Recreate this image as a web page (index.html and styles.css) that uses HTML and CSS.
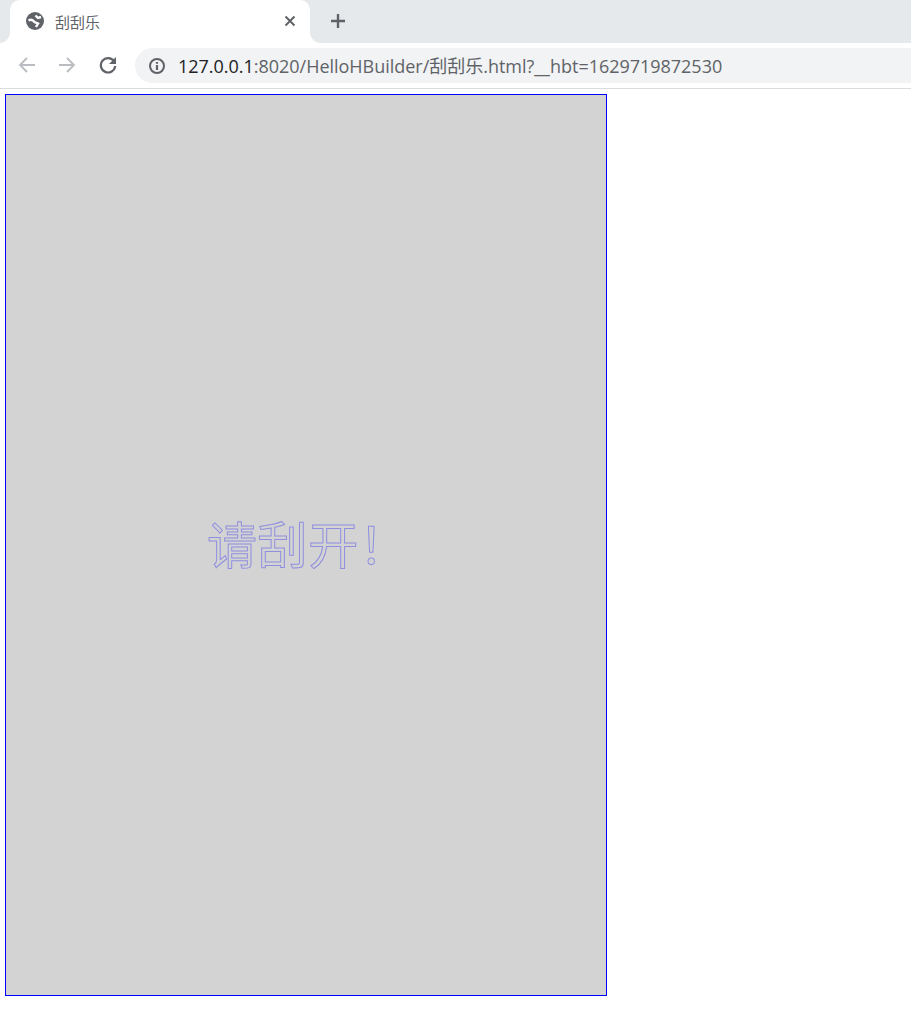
FILE: index.html
```html
<!DOCTYPE html>
<html lang="zh-CN">
<head>
<meta charset="utf-8">
<title>刮刮乐</title>
<link rel="stylesheet" href="styles.css">
</head>
<body>
<header class="chrome">
  <div class="tabstrip">
    <div class="tab">
      <svg class="favicon" viewBox="0 0 18 18" width="18" height="18"><circle cx="9" cy="9" r="9" fill="#5f6368"/><path d="M2.5 8.5C5 7.2 7 8 8.5 10L12 11.5 10 15M9.5 3.5 12 6 15 5" stroke="#fff" stroke-width="2.4" fill="none"/></svg>
      <span class="tab-title">刮刮乐</span>
      <svg class="tab-close" viewBox="0 0 12 12" width="12" height="12"><path d="M1.5 1.5 10.5 10.5M10.5 1.5 1.5 10.5" stroke="#5f6368" stroke-width="2" fill="none"/></svg>
    </div>
    <svg class="new-tab" viewBox="0 0 16 16" width="16" height="16"><path d="M8 1V15M1 8H15" stroke="#5f6368" stroke-width="2.4" fill="none"/></svg>
  </div>
  <div class="toolbar">
    <svg class="nav" viewBox="0 0 18 18" width="18" height="18"><path d="M17 9H2M9 2 2 9 9 16" stroke="#b9bcc0" stroke-width="1.8" fill="none"/></svg>
    <svg class="nav" viewBox="0 0 18 18" width="18" height="18"><path d="M1 9H16M9 2 16 9 9 16" stroke="#b9bcc0" stroke-width="1.8" fill="none"/></svg>
    <svg class="nav" viewBox="0 0 18 18" width="18" height="18"><path d="M15 5.2A7.2 7.2 0 1 0 16.2 10" stroke="#5f6368" stroke-width="2.2" fill="none"/><path d="M17 1V8H10Z" fill="#5f6368"/></svg>
    <div class="omnibox">
      <svg class="info" viewBox="0 0 16 16" width="16" height="16"><circle cx="8" cy="8" r="7" stroke="#5f6368" stroke-width="2" fill="none"/><path d="M8 7V12M8 4V5.8" stroke="#5f6368" stroke-width="2.2" fill="none"/></svg>
      <span class="url"><span class="host">127.0.0.1</span>:8020/HelloHBuilder/刮刮乐.html?__hbt=1629719872530</span>
    </div>
  </div>
</header>
<main class="page">
  <div class="scratch"><span class="scratch-text">请刮开！</span></div>
</main>
</body>
</html>
```
FILE: styles.css
```css
html, body { margin: 0; padding: 0; background: #fff; }
body { font-family: "Liberation Sans", "Noto Sans CJK SC", sans-serif; }
.chrome { height: 89px; box-sizing: border-box; border-bottom: 1px solid #dadce0; background: #fff; }
.tabstrip { height: 43px; background: #e6e9ec; display: flex; align-items: center; }
.tab { position: relative; width: 300px; height: 43px; margin-left: 10px; background: #fff; border-radius: 10px 10px 0 0; display: flex; align-items: center; box-sizing: border-box; padding: 0 14px 0 16px; }
.tab::before, .tab::after { content: ""; position: absolute; bottom: 0; width: 10px; height: 10px; }
.tab::before { right: 100%; background: radial-gradient(circle at 0 0, transparent 9.5px, #fff 10px); }
.tab::after { left: 100%; background: radial-gradient(circle at 100% 0, transparent 9.5px, #fff 10px); }
.favicon { flex: none; margin-top: -1px; }
.tab-title { margin-left: 11px; margin-top: -1px; font-size: 15px; color: #5f6368; flex: 1; }
.tab-close { flex: none; margin-top: -1px; }
.new-tab { margin-left: 20px; margin-top: -1px; }
.toolbar { height: 45px; display: flex; align-items: center; padding-left: 18px; padding-bottom: 1px; box-sizing: border-box; }
.nav { margin-right: 22px; flex: none; }
.nav:nth-child(3) { margin-left: 1px; margin-right: 18px; }
.omnibox { flex: 1; height: 35px; margin-top: 1px; background: #f1f3f4; border-radius: 18px 0 0 18px; display: flex; align-items: center; padding-left: 14px; }
.info { flex: none; }
.url { margin-left: 13px; margin-top: -1px; font-family: "Open Sans", "Noto Sans CJK SC", sans-serif; font-size: 18px; letter-spacing: -0.02px; color: #5f6368; white-space: nowrap; }
.host { color: #202124; }
.page { padding: 5px; }
.scratch { width: 602px; height: 902px; box-sizing: border-box; border: 1px solid #00f; background: #d3d3d3; display: flex; align-items: center; padding-left: 201px; }
.scratch-text { font-family: "Noto Sans CJK SC", sans-serif; font-size: 50px; line-height: 1; letter-spacing: 0.6px; color: transparent; -webkit-text-stroke: 1px #8f8fe0; margin-top: -6px; white-space: nowrap; }
```
